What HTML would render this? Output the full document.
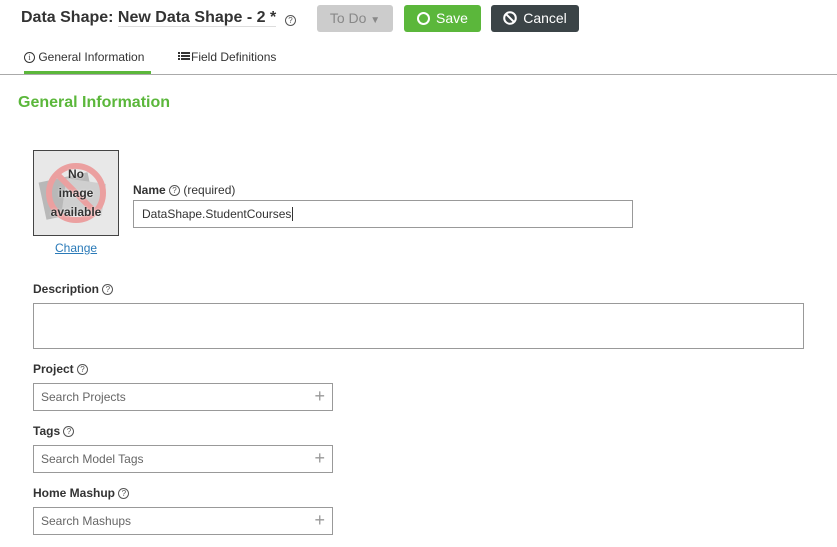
<!DOCTYPE html>
<html><head><meta charset="utf-8"><style>
*{box-sizing:border-box;margin:0;padding:0}
body{width:837px;height:547px;background:#fff;font-family:"Liberation Sans",Arial,sans-serif;color:#333;position:relative;overflow:hidden}
.a{position:absolute}
.q{display:inline-block;width:11px;height:11px;border:1px solid #555;border-radius:50%;font-size:8px;line-height:9px;text-align:center;font-weight:normal;vertical-align:1px;color:#555}
.lbl{font-size:12px;font-weight:bold;color:#333}
.inp{border:1px solid #999;background:#fff;font-size:12px;color:#666;padding-left:7px;line-height:27px}
.plus{position:absolute;right:7px;top:0;font-size:18px;color:#999;line-height:24px;font-weight:300}
.btn{border-radius:3px;height:27px;font-size:14px;line-height:27px;text-align:center;color:#fff}
</style></head><body>
<div class="a" style="left:21px;top:9px;font-size:16px;font-weight:bold;color:#333">Data Shape: <span style="border-bottom:1px solid #ddd">New Data Shape - 2 *</span></div>
<div class="a" style="left:285px;top:11px"><span class="q">?</span></div>
<div class="a btn" style="left:317px;top:5px;width:76px;background:#ccc;color:#888">To Do <span style="font-size:10px">▼</span></div>
<div class="a btn" style="left:404px;top:5px;width:77px;background:#5bb73b"><span style="display:inline-block;width:13px;height:13px;border:2px solid #fff;border-radius:50%;vertical-align:-2px;margin-right:6px"></span>Save</div>
<div class="a btn" style="left:491px;top:5px;width:88px;background:#3b4447"><svg width="14" height="14" viewBox="0 0 14 14" style="vertical-align:-2px;margin-right:6px"><circle cx="7" cy="7" r="5.8" fill="none" stroke="#fff" stroke-width="2"/><line x1="3" y1="3" x2="11" y2="11" stroke="#fff" stroke-width="2"/></svg>Cancel</div>
<div class="a" style="left:24px;top:50px;font-size:12px;color:#333"><span class="q" style="color:#333;border-color:#333;font-family:serif">i</span> General Information</div>
<div class="a" style="left:178px;top:50px;font-size:12px;color:#333"><svg width="12" height="11" style="vertical-align:-1px;margin-right:1px"><g fill="#333"><rect x="0" y="1" width="2" height="2"/><rect x="3" y="1" width="9" height="2"/><rect x="0" y="4" width="2" height="2"/><rect x="3" y="4" width="9" height="2"/><rect x="0" y="7" width="2" height="2"/><rect x="3" y="7" width="9" height="2"/></g></svg>Field Definitions</div>
<div class="a" style="left:24px;top:71px;width:127px;height:3px;background:#5bb73b"></div>
<div class="a" style="left:0;top:74px;width:837px;height:1px;background:#aaa"></div>
<div class="a" style="left:18px;top:94px;font-size:16px;font-weight:bold;color:#5bb73b">General Information</div>
<div class="a" style="left:33px;top:150px;width:86px;height:86px;border:1px solid #444;background:#e8e8e8;overflow:hidden">
<svg class="a" style="left:0;top:0" width="84" height="84"><rect x="8" y="26" width="50" height="38" fill="#b8b8b8" transform="rotate(-12 33 45)"/><rect x="30" y="30" width="40" height="32" fill="#cfcfcf" transform="rotate(8 50 46)"/><circle cx="42" cy="42" r="27" fill="none" stroke="#eba0a0" stroke-width="6"/><line x1="23" y1="23" x2="61" y2="61" stroke="#eba0a0" stroke-width="6"/></svg>
<div class="a" style="left:0;top:14px;width:84px;text-align:center;font-size:12px;font-weight:bold;line-height:19px;color:#333;text-shadow:0 0 2px #fff">No<br>image<br>available</div></div>
<div class="a" style="left:55px;top:241px;font-size:12px;color:#2a7ab8;text-decoration:underline">Change</div>
<div class="a lbl" style="left:133px;top:183px">Name <span class="q">?</span> <span style="font-weight:normal">(required)</span></div>
<div class="a inp" style="left:133px;top:200px;width:500px;height:28px;color:#333;padding-left:8px">DataShape.StudentCourses<span style="border-left:1px solid #333;margin-left:1px"></span></div>
<div class="a lbl" style="left:33px;top:282px">Description <span class="q">?</span></div>
<div class="a inp" style="left:33px;top:303px;width:771px;height:46px"></div>
<div class="a lbl" style="left:33px;top:362px">Project <span class="q">?</span></div>
<div class="a inp" style="left:33px;top:383px;width:300px;height:28px">Search Projects<span class="plus">+</span></div>
<div class="a lbl" style="left:33px;top:424px">Tags <span class="q">?</span></div>
<div class="a inp" style="left:33px;top:445px;width:300px;height:28px">Search Model Tags<span class="plus">+</span></div>
<div class="a lbl" style="left:33px;top:486px">Home Mashup <span class="q">?</span></div>
<div class="a inp" style="left:33px;top:507px;width:300px;height:28px">Search Mashups<span class="plus">+</span></div>
</body></html>
